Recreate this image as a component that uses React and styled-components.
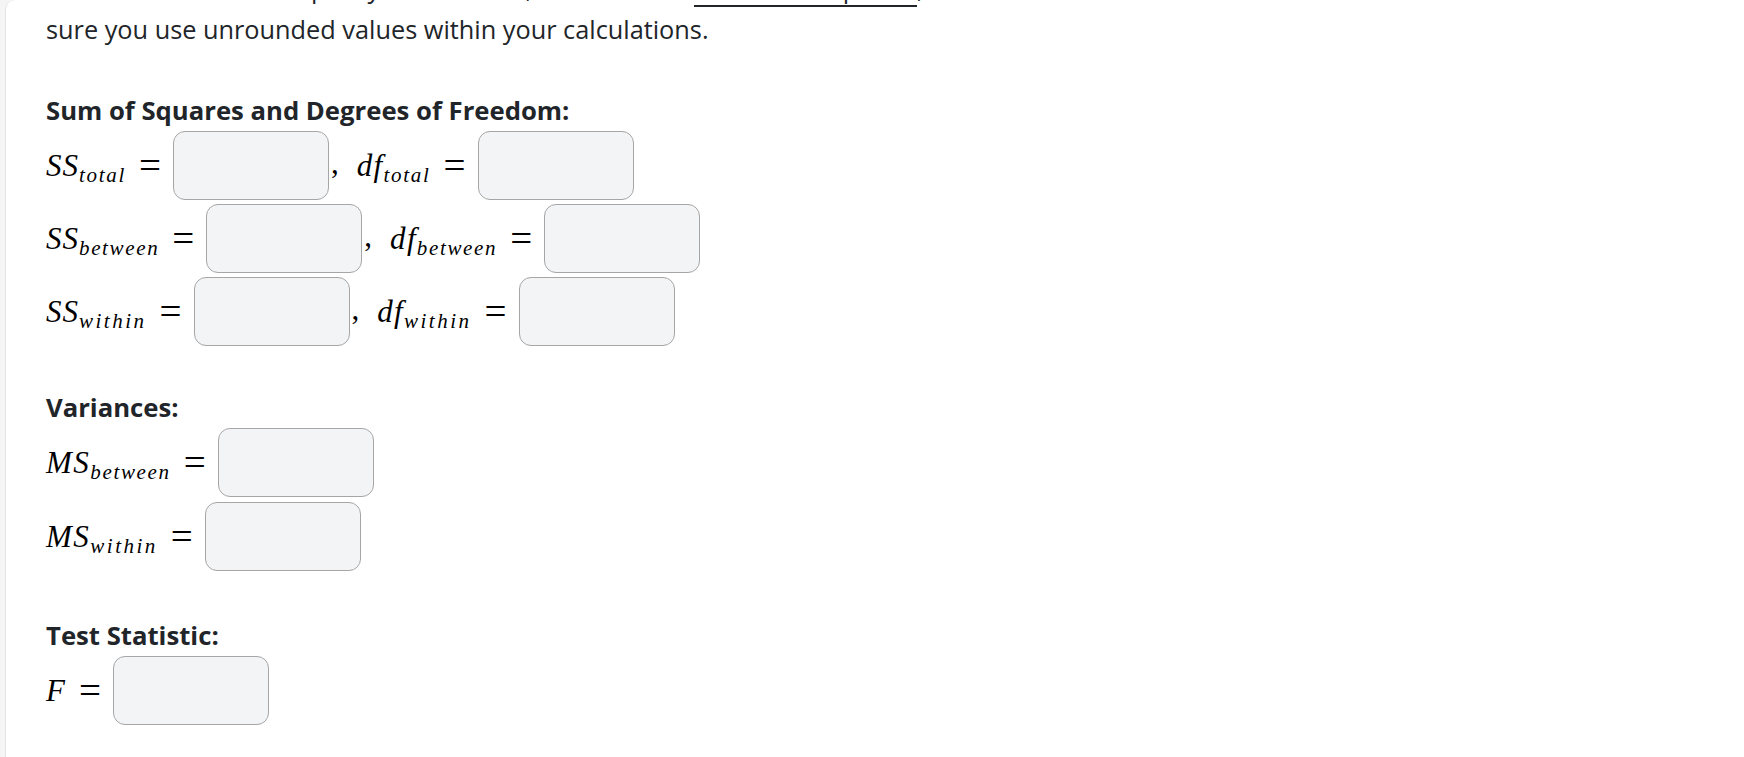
import styled, { createGlobalStyle } from "styled-components";

const GlobalStyle = createGlobalStyle`
  html, body {
    margin: 0;
    padding: 0;
    background: #f5f5f5;
    overflow: hidden;
  }
  body {
    font-family: "Open Sans", "Noto Sans", sans-serif;
    color: #212529;
  }
`;

const Page = styled.div`
  padding-left: 5px;
  height: 757px;
`;

const Card = styled.div`
  background: #fff;
  border-left: 1px solid #e3e3e3;
  border-top-left-radius: 10px;
  height: 100%;
  padding: 0 40px;
  overflow: hidden;
`;

const Intro = styled.p`
  margin: -32px 0 0;
  font-size: 25.3px;
  line-height: 41px;
`;

const BlankLink = styled.span`
  border-bottom: 2px solid #212529;
`;

const Section = styled.section`
  margin-top: ${(p) => p.$top || 46}px;
`;

const Heading = styled.h3`
  margin: 0 0 5px;
  font-size: 25.7px;
  font-weight: 700;
  line-height: 30px;
`;

const Rows = styled.div`
  display: flex;
  flex-direction: column;
  gap: ${(p) => p.$gap || 4}px;
`;

const Row = styled.div`
  display: flex;
  align-items: center;
`;

const serif = `"Liberation Serif", "Times New Roman", serif`;

const Math = styled.span`
  font-family: ${serif};
  font-style: italic;
  font-size: 31px;
  line-height: 1;
  color: #000;
  letter-spacing: ${(p) => p.$spacing ?? 1}px;
  white-space: nowrap;
`;

const Sub = styled.span`
  font-family: ${serif};
  font-style: italic;
  font-size: 21px;
  position: relative;
  top: 0.3em;
  line-height: 0;
  letter-spacing: ${(p) => p.$spacing}px;
`;

const Eq = styled.span`
  font-family: ${serif};
  font-size: 39px;
  line-height: 1;
  color: #000;
  margin: 0 12px 0 13px;
`;

const Comma = styled.span`
  font-family: ${serif};
  font-size: 31px;
  line-height: 1;
  color: #000;
  margin: -6px 18px 0 2px;
`;

const AnswerBox = styled.input`
  box-sizing: border-box;
  width: 156px;
  height: 69px;
  border: 1px solid #a6a6a6;
  border-radius: 12px;
  background: #f3f4f6;
  font-size: 22px;
  padding: 0 12px;
  outline: none;
`;

const subSpacing = { total: 1.7, between: 1.65, within: 2.5 };

const Term = ({ base, sub, spacing }) => (
  <Math $spacing={spacing}>
    {base}
    <Sub $spacing={subSpacing[sub]}>{sub}</Sub>
  </Math>
);

const sums = ["total", "between", "within"];

export default function App() {
  return (
    <Page>
      <GlobalStyle />
      <Card>
        <Intro>
          Find each value and report your answers, round to the{" "}
          <BlankLink>two decimal places</BlankLink>, but make
          <br />
          sure you use unrounded values within your calculations.
        </Intro>

        <Section>
          <Heading>Sum of Squares and Degrees of Freedom:</Heading>
          <Rows>
            {sums.map((sub) => (
              <Row key={sub}>
                <Term base="SS" sub={sub} />
                <Eq>=</Eq>
                <AnswerBox type="text" />
                <Comma>,</Comma>
                <Term base="df" sub={sub} spacing={1.3} />
                <Eq>=</Eq>
                <AnswerBox type="text" />
              </Row>
            ))}
          </Rows>
        </Section>

        <Section $top={47}>
          <Heading>Variances:</Heading>
          <Rows $gap={5}>
            <Row>
              <Term base="MS" sub="between" spacing={1.5} />
              <Eq>=</Eq>
              <AnswerBox type="text" />
            </Row>
            <Row>
              <Term base="MS" sub="within" spacing={1.5} />
              <Eq>=</Eq>
              <AnswerBox type="text" />
            </Row>
          </Rows>
        </Section>

        <Section $top={50}>
          <Heading>Test Statistic:</Heading>
          <Row>
            <Math>F</Math>
            <Eq>=</Eq>
            <AnswerBox type="text" />
          </Row>
        </Section>
      </Card>
    </Page>
  );
}
